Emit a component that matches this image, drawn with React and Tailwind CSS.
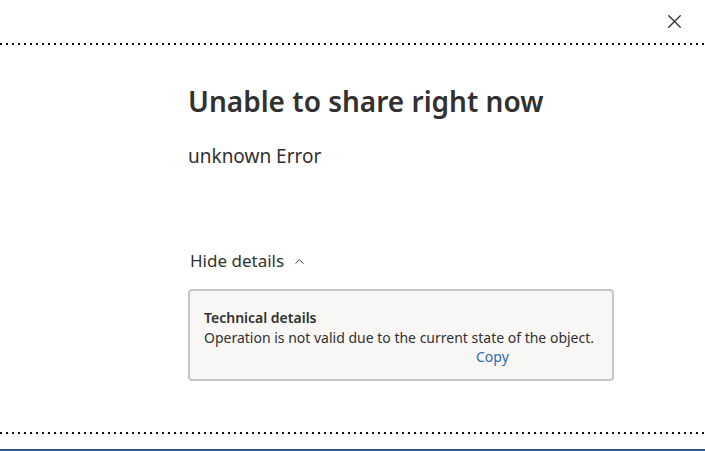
import React from 'react'
import { X, ChevronUp } from 'lucide-react'

const Dots = () => (
  <div className="h-[2px] w-full bg-[linear-gradient(to_right,#111_2px,transparent_2px)] bg-[length:6px_2px]" />
)

const App = () => {
  return (
    <div className="w-[705px] h-[451px] bg-white flex flex-col font-['Noto_Sans',sans-serif] text-[#323130] overflow-hidden">
      <div className="h-[43px] flex justify-end items-start pt-[10px] pr-[19px]">
        <X className="w-[23px] h-[23px] text-[#323130]" strokeWidth={1.4} />
      </div>
      <Dots />
      <div className="flex-1 pl-[188px] pt-[38px]">
        <h1 className="text-[28px] font-semibold leading-[36px]">Unable to share right now</h1>
        <p className="text-[19px] leading-[26px] mt-[24px]">unknown Error</p>
        <button className="flex items-center gap-[8px] mt-[80px] ml-[2px] text-[17px] leading-[24px]">
          Hide details
          <ChevronUp className="w-[15px] h-[15px]" strokeWidth={1.5} />
        </button>
        <div className="mt-[16px] w-[426px] h-[92px] border-2 border-[#c8c6c4] rounded-[4px] bg-[#f8f7f6] pl-[14px] pt-[17px] text-[14px] leading-[19.5px]">
          <div className="font-semibold">Technical details</div>
          <div>Operation is not valid due to the current state of the object.</div>
          <div className="text-[#2b6cb0] pl-[272px]">Copy</div>
        </div>
      </div>
      <div className="mb-[15px]">
        <Dots />
      </div>
      <div className="h-[2px] bg-[#2e5b8c]" />
    </div>
  )
}

export default App
